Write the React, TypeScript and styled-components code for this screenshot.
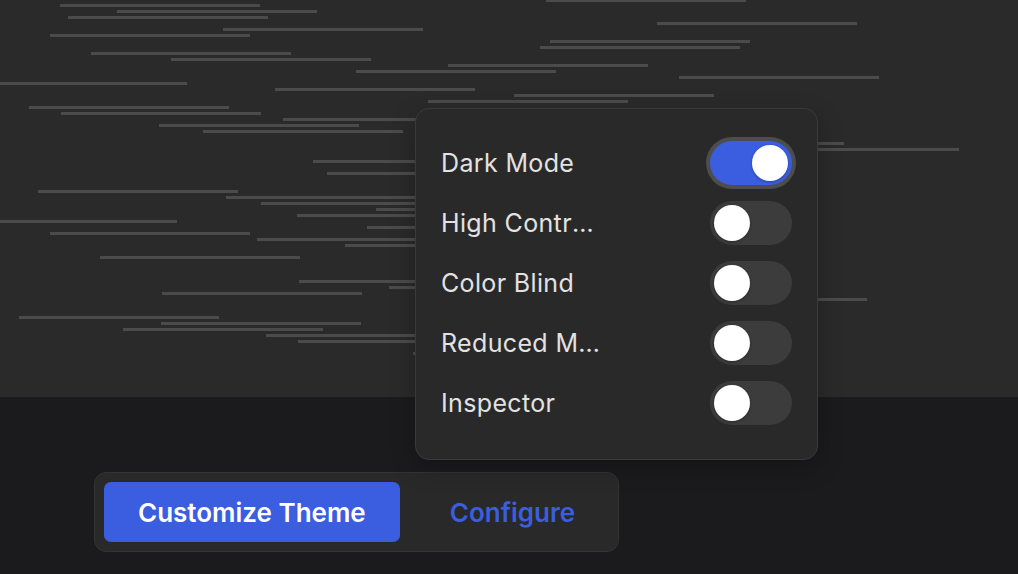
import React, { useState } from 'react';
import styled, { createGlobalStyle } from 'styled-components';

const GlobalStyle = createGlobalStyle`
  html, body {
    margin: 0;
    padding: 0;
    background: #1b1b1d;
  }
  body {
    font-family: Inter, "Noto Sans", "Liberation Sans", sans-serif;
    -webkit-font-smoothing: antialiased;
  }
`;

// [left, top] of each 200px stroke on the backdrop
const strokes: [number, number][] = [
  [546, -1], [60, 4], [117, 10], [68, 16], [657, 22], [223, 28], [50, 34],
  [550, 40], [540, 46], [91, 52], [171, 58], [448, 64], [356, 70], [679, 76],
  [-13, 82], [275, 88], [514, 94], [428, 100], [29, 106], [61, 112], [283, 118],
  [159, 124], [203, 130], [644, 142], [759, 148], [313, 160], [327, 172],
  [38, 190], [226, 196], [261, 202], [376, 208], [297, 214], [-23, 220],
  [367, 226], [50, 232], [257, 238], [345, 244], [100, 256], [299, 280],
  [389, 286], [162, 292], [667, 298], [19, 316], [161, 322], [123, 328],
  [266, 334], [298, 340], [413, 352],
];

const Page = styled.div`
  position: relative;
  width: 1018px;
  height: 574px;
  overflow: hidden;
  background: #1b1b1d;
`;

const Backdrop = styled.div`
  position: relative;
  height: 397px;
  background: #2a2a2a;
  overflow: hidden;
`;

const Stroke = styled.div`
  position: absolute;
  width: 200px;
  height: 3px;
  background: #4b4b4b;
`;

const Popover = styled.div`
  position: absolute;
  left: 415px;
  top: 108px;
  width: 403px;
  box-sizing: border-box;
  display: flex;
  flex-direction: column;
  gap: 16px;
  padding: 32px 25px 34px;
  background: #292929;
  border: 1px solid #3a3a3a;
  border-radius: 14px;
  box-shadow: 0 8px 24px rgba(0, 0, 0, 0.25);
`;

const Row = styled.div`
  display: flex;
  align-items: center;
  justify-content: space-between;
  height: 44px;
`;

const Label = styled.span`
  max-width: 162px;
  overflow: hidden;
  white-space: nowrap;
  text-overflow: ellipsis;
  font-size: 25px;
  font-weight: 400;
  color: #e2e2e2;
  letter-spacing: 0.35px;
`;

const Track = styled.button<{ $on: boolean; $focused: boolean }>`
  display: flex;
  align-items: center;
  justify-content: ${({ $on }) => ($on ? 'flex-end' : 'flex-start')};
  width: 82px;
  height: 44px;
  padding: 0 4px;
  border: none;
  border-radius: 22px;
  background: ${({ $on }) => ($on ? '#3b5de0' : '#3c3c3c')};
  box-shadow: ${({ $focused }) => ($focused ? '0 0 0 4px #4d4d4d' : 'none')};
  cursor: pointer;
`;

const Knob = styled.span`
  width: 36px;
  height: 36px;
  border-radius: 50%;
  background: #ffffff;
  box-shadow: 0 1px 3px rgba(0, 0, 0, 0.3);
`;

const Footer = styled.div`
  padding: 75px 0 0 94px;
`;

const ButtonGroup = styled.div`
  display: inline-flex;
  gap: 16px;
  padding: 9px;
  background: #292929;
  border: 1px solid #333333;
  border-radius: 12px;
`;

const ActionButton = styled.button<{ $primary?: boolean }>`
  height: 60px;
  padding: 0 34px;
  border: none;
  border-radius: 7px;
  font-family: inherit;
  font-size: 26px;
  font-weight: 600;
  background: ${({ $primary }) => ($primary ? '#3b5de0' : 'transparent')};
  color: ${({ $primary }) => ($primary ? '#ffffff' : '#3b5de0')};
  cursor: pointer;
`;

const settings = ['Dark Mode', 'High Contrast', 'Color Blind', 'Reduced Motion', 'Inspector'];

const App: React.FC = () => {
  const [enabled, setEnabled] = useState<Record<string, boolean>>({ 'Dark Mode': true });

  return (
    <Page>
      <GlobalStyle />
      <Backdrop>
        {strokes.map(([x, y], i) => (
          <Stroke key={i} style={{ left: x, top: y }} />
        ))}
      </Backdrop>

      <Popover>
        {settings.map((name, i) => (
          <Row key={name}>
            <Label>{name}</Label>
            <Track
              role="switch"
              aria-checked={!!enabled[name]}
              $on={!!enabled[name]}
              $focused={i === 0}
              onClick={() => setEnabled((s) => ({ ...s, [name]: !s[name] }))}
            >
              <Knob />
            </Track>
          </Row>
        ))}
      </Popover>

      <Footer>
        <ButtonGroup>
          <ActionButton $primary>Customize Theme</ActionButton>
          <ActionButton>Configure</ActionButton>
        </ButtonGroup>
      </Footer>
    </Page>
  );
};

export default App;
